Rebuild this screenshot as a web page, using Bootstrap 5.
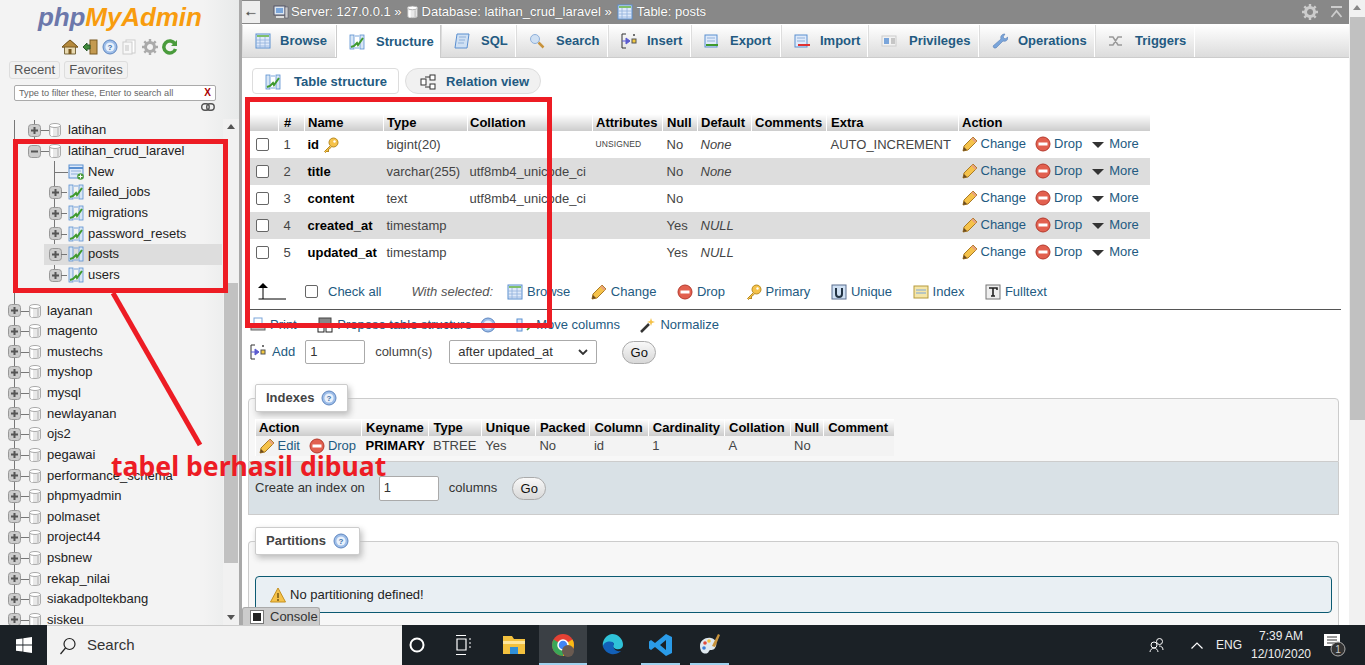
<!DOCTYPE html>
<html lang="en">
<head>
<meta charset="utf-8">
<title>phpMyAdmin</title>
<link href="https://cdn.jsdelivr.net/npm/bootstrap@5.3.0/dist/css/bootstrap.min.css" rel="stylesheet">
<style>
html,body{height:665px;overflow:hidden}
body{font-family:"Liberation Sans",Arial,sans-serif;font-size:13px;color:#444;background:#fff;width:1365px;position:relative}
a{text-decoration:none;color:#235a81}
.ic{width:16px;height:16px;flex:none;display:block}
.app{height:625px}
/* sidebar */
.side{width:242px;flex:none;background:linear-gradient(90deg,#f3f3f3 85%,#e8eaea);border-right:3px solid #a9a9a9;box-sizing:border-box;position:relative}
.logo{font-style:italic;font-weight:700;font-size:26px;line-height:26px;height:36px;padding-top:4px;padding-left:38px;letter-spacing:-.1px}
.logo i{color:#6c78ab}.logo b{color:#f89c0e;font-weight:700;font-style:italic}
.navic{height:25px;padding-left:62px;gap:4px;padding-top:3px}
.rf{padding-left:9px;gap:4px;height:21px}
.rf span{border:1px solid #ddd;border-radius:3px;padding:0 4px;font-size:13px;line-height:16px;height:18px;color:#555;background:#f1f1f1}
.flt{margin:3px 0 0 14px;width:202px;height:16px;background:#fff;border:1px solid #aaa;border-radius:2px;font-size:9.2px;line-height:14px;color:#666;padding:0 4px;justify-content:space-between}
.flt b{color:#a00;font-size:10px}
.lnk{height:21px;padding:2px 25px 0 0;justify-content:flex-end;width:240px}
.tree{position:absolute;left:0;top:120px;width:223px;height:505px;overflow:hidden;font-size:13px;color:#222;background:linear-gradient(#777,#777) 14px 0/1px 100% no-repeat}
.trow{height:20.68px;line-height:16px;position:relative;white-space:nowrap;align-items:center}
.trow::before{content:"";position:absolute;top:50%;height:1px;background:#777}
.lv0{padding-left:8px;height:20.63px}.lv0::before{left:21px;width:8px}
.lv1{padding-left:28px}.lv1::before{left:41px;width:8px}
.lv2{padding-left:49px}.lv2::before{left:61px;width:6px}
.lv2n::before{left:54px;width:14px}
.vl{background:linear-gradient(#777,#777) 34px 0/1px 100% no-repeat}
.sq{width:13px;height:13px;flex:none;display:block}
.sq2{width:12px;height:14px;flex:none;display:block;margin:0 7px 0 8px}
.lv0 .sq2{margin-right:6px}
.sq3{width:16px;height:16px;flex:none;display:block;margin:0 4px 0 6px}
.kids{background:linear-gradient(#777,#777) 54px 0/1px calc(100% - 10px) no-repeat}
.hl{background:linear-gradient(#ddd,#ddd) 44px 0/178px 100% no-repeat}
.gap0{height:14.9px}
.sscr{position:absolute;left:223px;top:119px;width:16px;height:506px;background:#f1f1f1}
.sscr i{position:absolute;left:1px;top:164px;width:14px;height:280px;background:#c1c1c1}
.tu{position:absolute;left:4px;width:0;height:0;border-left:4px solid transparent;border-right:4px solid transparent}
.tu1{top:5px;border-bottom:5px solid #555}
.tu2{bottom:5px;border-top:5px solid #555}
.tu3{top:5px;border-bottom:5px solid #888}
/* main */
.mainc{width:1123px;flex:none;position:relative;overflow:hidden}
.topb{height:24px;background:#888;color:#fff;font-size:13px;gap:4px;text-shadow:0 0 1px #555}
.bk{width:18px;height:22px;background:#eee;color:#555;text-align:center;line-height:20px;font-size:15px;margin-right:9px}
.cyl{width:11px;height:14px;flex:none}
.srv{margin:0 1px 0 -2px}
.dbtx{margin-right:1px}
.topr{margin-left:auto;gap:12px;padding-right:22px}
.mscr{position:absolute;right:0;top:0;width:16px;height:625px;background:#f1f1f1}
.mscr i{position:absolute;left:1px;top:17px;width:15px;height:403px;background:#c1c1c1}
.tabsb{height:33px;margin-top:1px;background:linear-gradient(#fff,#dcdcdc);width:1107px;border-bottom:1px solid #ccc}
.tb{height:32px;font-size:13px;font-weight:700;color:#235a81;border-right:1px solid #fff;border-left:1px solid #ddd;flex:none;align-items:center;box-sizing:border-box;padding-left:12px}
.tb .ic{margin-right:9px}
.tb.on{background:#fff;border-left:1px solid #ccc;border-right:1px solid #ccc;height:33px}
.t1{width:94px}.t2{width:105px}.t3{width:75px}.t4{width:92px}.t5{width:83px}.t6{width:90px}.t7{width:87px}.t8{width:111px}.t9{width:116px}.t10{width:100px}
.t2 .ic,.t4 .ic{margin-right:11px}
.t3 .ic{margin-right:11px}
.t5 .ic{margin-right:10px}
.t6 .ic,.t7 .ic,.t9 .ic{margin-right:10px}
.t10 .ic{margin-right:11px}
.t8 .ic{margin-right:12px}
.pg{padding-left:6px;width:1107px}
.sbt{margin-top:10px;height:26px;padding-left:4px;gap:6px}
.sbt div{border:1px solid #ddd;height:26px;font-weight:700;color:#235a81;padding:1px 10px 0 12px;align-items:center}
.sbt .a1{border-radius:4px;background:#fff;width:147px;gap:13px}
.sbt .a2{border-radius:13px;background:#f1f1f1;width:136px;padding-left:14px;gap:10px}
.stt{border-collapse:collapse;margin-top:20px;table-layout:fixed;width:901px;font-size:13px;color:#444}
.c1{width:30px}.c2{width:26px}.c3{width:79px}.c4{width:84px}.c5{width:125px}.c6{width:70px}.c7{width:35px}.c8{width:54px}.c9{width:75px}.c10{width:132px}.c11{width:191px}
.stt th{height:17px;padding:0 3px;color:#000;font-weight:700;background:linear-gradient(#fff,#ccc);border-left:1px solid #fff;line-height:15px;white-space:nowrap}
.stt td{height:27px;padding:0 3px;white-space:nowrap;overflow:hidden}
.stt th:nth-child(2),.stt td:nth-child(2){padding-left:5px}
.stt th:nth-child(7),.stt td:nth-child(7){padding-left:4px}
.stt th:nth-child(5),.stt td:nth-child(5){padding-left:2px}
.stt th:nth-child(10),.stt td:nth-child(10){padding-left:4px}
.stt tbody tr:nth-child(even) td{background:#ddd}
.stt td.nm{color:#000;font-weight:700}
.cb{width:13px;height:13px;border:1px solid #666;border-radius:2px;background:#fff;display:block;margin-left:4px}
.un{font-size:8.5px;letter-spacing:.1px}
.act{gap:3px;color:#235a81;align-items:center}
.act a{margin-right:6px}
.act a.lst{margin-right:0}
.stt .act{margin-top:-1px}
.tri{width:0;height:0;border-left:6px solid transparent;border-right:6px solid transparent;border-top:6px solid #333;margin:1px 2px 0 1px}
.wsel{height:30px;margin-top:10px;padding-left:10px;align-items:center;color:#235a81}
.wsel .it{gap:4px;align-items:center;margin-right:20.5px;padding-top:1px}
.wsel>.cb,.wsel>.chk,.wsel>.wtx{margin-top:1px}
.arw{margin-right:19px;flex:none}
.wsel .cb{margin:0 10px 0 0;flex:none}
.chk{margin-right:30px}
.wtx{margin-right:14px;color:#555}
.rule{border-top:1px solid #555;margin:3px 0 0 0;width:1093px;height:0}
.prn{height:30px;padding-left:2px;color:#235a81;align-items:center}
.prn .it{gap:4px;align-items:center;margin-right:20.5px}
.addr{height:24px;align-items:center;padding-left:2px}
.addr .ic{margin-right:6px}
.addt{color:#235a81}
.nin{width:60px;height:24px;border:1px solid #aaa;border-radius:2px;padding:0 4px;line-height:22px;background:#fff;margin:0 10px 0 10px;color:#333;flex:none}
.sel{width:148px;height:24px;border:1px solid #aaa;border-radius:2px;background:#fff;padding:0 8px;color:#333;margin:0 25px 0 17px;justify-content:space-between;align-items:center;flex:none}
.gob{border:1px solid #aaa;border-radius:12px;background:linear-gradient(#f8f8f8,#d8d8d8);width:34px;height:23px;text-align:center;line-height:21px;color:#111;flex:none}
.fs{width:1091px;border:1px solid #ccc;border-radius:4px 4px 0 0;background:#f7f7f7;box-sizing:border-box}
.fs1{margin-top:34px;height:64px}
.fs2{margin-top:26px;height:90px;border-bottom:0}
.lg{display:flex;width:fit-content;align-items:center;gap:7px;background:#fff;border:1px solid #ccc;border-radius:2px;height:28px;padding:0 10px;margin:-15px 0 0 6px;font-weight:700;color:#444;box-shadow:2px 3px 6px #bbb;font-size:13px}
.ixt{border-collapse:collapse;margin:7px 0 0 6px;font-size:13px;background:#fff}
.ixt th{height:17px;padding:0 4px;color:#000;font-weight:700;background:linear-gradient(#fff,#ccc);border-left:1px solid #fff;line-height:15px;white-space:nowrap}
.ixt td{height:20px;padding:0 4px;white-space:nowrap;background:#f3f3f3}
.ixt th:nth-child(3),.ixt td:nth-child(3),.ixt th:nth-child(4),.ixt td:nth-child(4),.ixt th:nth-child(6),.ixt td:nth-child(6),.ixt th:nth-child(8),.ixt td:nth-child(8){padding-right:5px}
.ia{width:106px}.ic0{width:70px}
.ixt th.ia{padding-left:3px}
.ixt .act{margin-left:-1px}
.ipk{font-weight:700;color:#000}
.fbar{width:1091px;height:53px;background:#d9e1e6;border:1px solid #ccc;border-top:0;box-sizing:border-box;align-items:center;padding-left:6px;color:#333}
.fbar .nin{margin:0 10px 0 14px;height:25px}
.fbar .gob{margin-left:15px}
.notc{margin:21px 0 0 6px;width:1077px;height:37px;background:#e9eff3;border:1px solid #0c5a72;border-radius:4px;color:#222;align-items:center;gap:4px;padding-left:14px;box-sizing:border-box}
.cons{position:absolute;left:0;bottom:0;width:78px;height:18px;background:#ccc;border:1px solid #aaa;border-bottom:0;border-radius:3px 3px 0 0;gap:6px;padding-left:7px;color:#333;align-items:center;font-size:13px;box-sizing:border-box}
/* taskbar */
.tskb{height:40px;background:#1b2126;color:#fff;box-sizing:border-box}
.sbx{width:355px;height:40px;background:#f2f2f2;color:#333;font-size:15px;gap:10px;align-items:center;padding-left:12px;flex:none;border-top:1px solid #ccc;box-sizing:border-box}
.tki{height:40px;flex:none;display:flex;align-items:center;justify-content:center;position:relative}
.k0{width:47px}.k1{width:29px}.k2{width:58px}.k2 svg{margin-left:6px}.k3{width:50px}.k4{width:48px}.k5,.k6,.k7{width:49px}
.tki.act1{background:#3b4045}
.tki.ul::after{content:"";position:absolute;left:5px;right:5px;bottom:0;height:2px;background:#9fd2ee}
.tki.act1::after{left:0;right:0}
.tray{margin-left:auto;align-items:center;color:#eee;font-size:12px}
.tp{margin-right:26px}
.tc{margin-right:13px}
.te{margin-right:8px}
.tm{width:62px;margin-right:11px;line-height:18px;text-align:center}
.tn{margin-right:16px}
/* annotation */
.rbx{position:absolute;border:5px solid #ed1c24;box-sizing:border-box;pointer-events:none}
.rb1{left:13px;top:139px;width:215px;height:154px}
.rb2{left:245px;top:97px;width:307px;height:231px}
.atx{position:absolute;left:111px;top:453px;font-family:"Noto Sans",sans-serif;font-weight:700;font-size:26.6px;line-height:26px;color:#ed1c24;white-space:nowrap}
.aln{position:absolute;left:0;top:0;width:1365px;height:665px;pointer-events:none}
</style>
</head>
<body>
<svg width="0" height="0" class="position-absolute">
<defs>
<symbol id="p" viewBox="0 0 13 13"><rect x=".5" y=".5" width="12" height="12" rx="3" fill="#ccc" stroke="#999"/><path d="M3 6.5h7M6.5 3v7" stroke="#555" stroke-width="2"/></symbol>
<symbol id="m" viewBox="0 0 13 13"><rect x=".5" y=".5" width="12" height="12" rx="3" fill="#ccc" stroke="#999"/><path d="M3 6.5h7" stroke="#555" stroke-width="2"/></symbol>
<symbol id="db" viewBox="0 0 12 14"><path d="M.5 2.500v9c0 1.200 2.400 2 5.500 2s5.500-.8 5.500-2v-9z" fill="#e8e8e8" stroke="#aaa"/><ellipse cx="6" cy="2.500" rx="5.500" ry="2" fill="#fff" stroke="#aaa"/><path d="M3 5v8" stroke="#fff" stroke-width="2"/><path d="M9 5v8" stroke="#ccc" stroke-width="2"/></symbol>
<symbol id="st" viewBox="0 0 16 16"><rect x="1" y="1" width="4" height="14" fill="#d8e6f5" stroke="#5a8fd0" stroke-width=".8"/><rect x="11" y="1" width="4" height="14" fill="#d8e6f5" stroke="#5a8fd0" stroke-width=".8"/><path d="M6 2h4M6 14h4" stroke="#7aa5da"/><path d="M2 13l3-1 3-3 1 2 5-7" fill="none" stroke="#3f9a2d" stroke-width="2"/></symbol>
<symbol id="br" viewBox="0 0 16 16"><rect x="1" y="1" width="14" height="14" fill="#dfeafa" stroke="#5a8fd0"/><rect x="2" y="2" width="12" height="2" fill="#7fbf6a"/><path d="M1 7h14M1 10h14M1 13h14M5 4v11M10 4v11" stroke="#8fb0da" stroke-width=".8"/></symbol>
<symbol id="nw" viewBox="0 0 16 16"><rect x="1" y="1" width="14" height="13" fill="#dfeafa" stroke="#5a8fd0"/><path d="M1 4h14" stroke="#5a8fd0" stroke-width="2"/><path d="M3 7h10M3 10h7" stroke="#8fb0da"/><circle cx="12.500" cy="12.500" r="3.300" fill="#4a9b3c"/><path d="M10.500 12.500h4M12.500 10.500v4" stroke="#fff"/></symbol>
<symbol id="pen" viewBox="0 0 16 16"><path d="M1 15l1-5L11 1l4 4-9 9z" fill="#f5c24a" stroke="#a87a25"/><path d="M1 15l1-4 3 3z" fill="#6a4a20"/><path d="M10 2l4 4" stroke="#e8a080" stroke-width="2"/></symbol>
<symbol id="dr" viewBox="0 0 16 16"><circle cx="8" cy="8" r="7" fill="#e2604f" stroke="#b5392c"/><rect x="3.500" y="6.500" width="9" height="3" fill="#fff"/></symbol>
<symbol id="key" viewBox="0 0 16 16"><circle cx="10.500" cy="5.500" r="4.500" fill="#f5c24a" stroke="#b88a20"/><circle cx="11.500" cy="4.500" r="1.200" fill="#fff"/><path d="M7 9l-5.500 5.500 1 1L4 14l1 1 1-1-1-1 3.500-3" fill="#f5c24a" stroke="#b88a20"/></symbol>
<symbol id="q" viewBox="0 0 16 16"><circle cx="8" cy="8" r="7" fill="#9dbde8" stroke="#5f87c0"/><circle cx="8" cy="8" r="4.600" fill="#e9f1fb"/><text x="8" y="11" font-size="8" font-weight="700" text-anchor="middle" fill="#3d6ca8" font-family="Liberation Sans">?</text></symbol>
<symbol id="ins" viewBox="0 0 16 16"><path d="M5 1H1v14h4" fill="none" stroke="#333"/><path d="M1 8h4V5l4 3-4 3V8" fill="#5b5bd0" stroke="#5b5bd0"/><rect x="11" y="6" width="4" height="4" fill="#f3c83f" stroke="#555"/><path d="M12 2h2M13 1v2" stroke="#444"/></symbol>
<symbol id="gear" viewBox="0 0 16 16"><circle cx="8" cy="8" r="4.500" fill="none" stroke="#ccc" stroke-width="3"/><path d="M8 0v3M8 13v3M0 8h3M13 8h3M2.300 2.300l2 2M11.700 11.700l2 2M13.700 2.300l-2 2M4.300 11.700l-2 2" stroke="#ccc" stroke-width="2.400"/></symbol>
</defs>
</svg>

<div class="app d-flex">
  <aside class="side">
    <div class="logo"><i>php</i><b>MyAdmin</b></div>
    <div class="navic d-flex">
      <svg class="ic" viewBox="0 0 16 16"><path d="M8 1L0 8h2.500v7h11V8H16z" fill="#e8d9b0" stroke="#7a6a40"/><path d="M8 1L0 8h16z" fill="#b5893c" stroke="#7a5a20"/><rect x="6.500" y="10" width="3" height="5" fill="#7a5a20"/></svg>
      <svg class="ic" viewBox="0 0 16 16"><rect x="8" y="1" width="7" height="14" fill="#c49a50" stroke="#7a5a20"/><path d="M1 8l4-4v2h3v4H5v2z" fill="#3f8a3a" stroke="#2a5a2a"/></svg>
      <svg class="ic" viewBox="0 0 16 16"><use href="#q"/></svg>
      <svg class="ic" viewBox="0 0 16 16"><rect x="4" y="1" width="9" height="13" fill="#fff" stroke="#ccc"/><rect x="1" y="3" width="9" height="12" fill="#f7f7f7" stroke="#ccc"/><rect x="3" y="6" width="4" height="6" fill="#ddd"/></svg>
      <svg class="ic" viewBox="0 0 16 16"><circle cx="8" cy="8" r="4.500" fill="none" stroke="#aaa" stroke-width="3"/><path d="M8 0v3M8 13v3M0 8h3M13 8h3M2.300 2.300l2 2M11.700 11.700l2 2M13.700 2.300l-2 2M4.300 11.700l-2 2" stroke="#aaa" stroke-width="2.400"/></svg>
      <svg class="ic" viewBox="0 0 16 16"><path d="M13 5a6 6 0 1 0 .5 5" fill="none" stroke="#4a9b3c" stroke-width="3.500"/><path d="M9 7h6V1z" fill="#4a9b3c"/></svg>
    </div>
    <div class="rf d-flex"><span>Recent</span><span>Favorites</span></div>
    <div class="flt d-flex"><span>Type to filter these, Enter to search all</span><b>X</b></div>
    <div class="lnk d-flex"><svg width="14" height="8" viewBox="0 0 14 8"><rect x=".7" y=".7" width="7.500" height="6.600" rx="3" fill="none" stroke="#555" stroke-width="1.400"/><rect x="5.700" y=".7" width="7.500" height="6.600" rx="3" fill="none" stroke="#555" stroke-width="1.400"/></svg></div>
    <div class="tree">
      <div class="trow d-flex lv1 vl"><svg class="sq"><use href="#p"/></svg><svg class="sq2"><use href="#db"/></svg><span>latihan</span></div>
      <div class="trow d-flex lv1"><svg class="sq"><use href="#m"/></svg><svg class="sq2"><use href="#db"/></svg><span>latihan_crud_laravel</span></div>
      <div class="kids">
        <div class="trow d-flex lv2 lv2n"><span class="sq"></span><svg class="sq3"><use href="#nw"/></svg><span>New</span></div>
        <div class="trow d-flex lv2"><svg class="sq"><use href="#p"/></svg><svg class="sq3"><use href="#st"/></svg><span>failed_jobs</span></div>
        <div class="trow d-flex lv2"><svg class="sq"><use href="#p"/></svg><svg class="sq3"><use href="#st"/></svg><span>migrations</span></div>
        <div class="trow d-flex lv2"><svg class="sq"><use href="#p"/></svg><svg class="sq3"><use href="#st"/></svg><span>password_resets</span></div>
        <div class="trow d-flex lv2 hl"><svg class="sq"><use href="#p"/></svg><svg class="sq3"><use href="#st"/></svg><span>posts</span></div>
        <div class="trow d-flex lv2"><svg class="sq"><use href="#p"/></svg><svg class="sq3"><use href="#st"/></svg><span>users</span></div>
      </div>
      <div class="gap0"></div>
      <div class="trow d-flex lv0"><svg class="sq"><use href="#p"/></svg><svg class="sq2"><use href="#db"/></svg><span>layanan</span></div>
      <div class="trow d-flex lv0"><svg class="sq"><use href="#p"/></svg><svg class="sq2"><use href="#db"/></svg><span>magento</span></div>
      <div class="trow d-flex lv0"><svg class="sq"><use href="#p"/></svg><svg class="sq2"><use href="#db"/></svg><span>mustechs</span></div>
      <div class="trow d-flex lv0"><svg class="sq"><use href="#p"/></svg><svg class="sq2"><use href="#db"/></svg><span>myshop</span></div>
      <div class="trow d-flex lv0"><svg class="sq"><use href="#p"/></svg><svg class="sq2"><use href="#db"/></svg><span>mysql</span></div>
      <div class="trow d-flex lv0"><svg class="sq"><use href="#p"/></svg><svg class="sq2"><use href="#db"/></svg><span>newlayanan</span></div>
      <div class="trow d-flex lv0"><svg class="sq"><use href="#p"/></svg><svg class="sq2"><use href="#db"/></svg><span>ojs2</span></div>
      <div class="trow d-flex lv0"><svg class="sq"><use href="#p"/></svg><svg class="sq2"><use href="#db"/></svg><span>pegawai</span></div>
      <div class="trow d-flex lv0"><svg class="sq"><use href="#p"/></svg><svg class="sq2"><use href="#db"/></svg><span>performance_schema</span></div>
      <div class="trow d-flex lv0"><svg class="sq"><use href="#p"/></svg><svg class="sq2"><use href="#db"/></svg><span>phpmyadmin</span></div>
      <div class="trow d-flex lv0"><svg class="sq"><use href="#p"/></svg><svg class="sq2"><use href="#db"/></svg><span>polmaset</span></div>
      <div class="trow d-flex lv0"><svg class="sq"><use href="#p"/></svg><svg class="sq2"><use href="#db"/></svg><span>project44</span></div>
      <div class="trow d-flex lv0"><svg class="sq"><use href="#p"/></svg><svg class="sq2"><use href="#db"/></svg><span>psbnew</span></div>
      <div class="trow d-flex lv0"><svg class="sq"><use href="#p"/></svg><svg class="sq2"><use href="#db"/></svg><span>rekap_nilai</span></div>
      <div class="trow d-flex lv0"><svg class="sq"><use href="#p"/></svg><svg class="sq2"><use href="#db"/></svg><span>siakadpoltekbang</span></div>
      <div class="trow d-flex lv0"><svg class="sq"><use href="#p"/></svg><svg class="sq2"><use href="#db"/></svg><span>siskeu</span></div>
    </div>
    <div class="sscr"><span class="tu tu1"></span><i></i><span class="tu tu2"></span></div>
  </aside>

  <main class="mainc">
    <div class="mscr"><span class="tu tu3"></span><i></i></div>
    <div class="topb d-flex align-items-center">
      <div class="bk">←</div>
      <svg class="ic" viewBox="0 0 16 16"><rect x="1" y="2" width="11" height="9" fill="#dce6f0" stroke="#556"/><rect x="3" y="4" width="7" height="5" fill="#7aa5da"/><rect x="12" y="3" width="3" height="11" fill="#ccc" stroke="#556" stroke-width=".6"/><path d="M3 13h8" stroke="#ddd" stroke-width="2"/></svg>
      <span class="srv">Server: 127.0.0.1 »</span>
      <svg class="cyl" viewBox="0 0 12 14"><use href="#db"/></svg>
      <span class="dbtx">Database: latihan_crud_laravel »</span>
      <svg class="ic" viewBox="0 0 16 16"><use href="#br"/></svg>
      <span>Table: posts</span>
      <div class="topr d-flex align-items-center">
        <svg class="ic" viewBox="0 0 16 16"><use href="#gear"/></svg>
        <svg width="13" height="12" viewBox="0 0 13 12"><path d="M1 1h11M1.500 11l5-6 5 6" fill="none" stroke="#ccc" stroke-width="1.800"/></svg>
      </div>
    </div>
    <div class="tabsb d-flex">
      <a class="tb t1 d-flex"><svg class="ic"><use href="#br"/></svg>Browse</a>
      <a class="tb t2 on d-flex"><svg class="ic"><use href="#st"/></svg>Structure</a>
      <a class="tb t3 d-flex"><svg class="ic" viewBox="0 0 16 16"><path d="M3 1h12l-2 14H1z" fill="#cfe0f3" stroke="#5a8fd0"/><path d="M5 4h7M5 7h6M4 10h6" stroke="#8fb0da"/></svg>SQL</a>
      <a class="tb t4 d-flex"><svg class="ic" viewBox="0 0 16 16"><circle cx="6" cy="6" r="4.500" fill="#cfe0f3" stroke="#8fb0da"/><path d="M9.500 9.500l5 5" stroke="#c8933c" stroke-width="2.500"/></svg>Search</a>
      <a class="tb t5 d-flex"><svg class="ic"><use href="#ins"/></svg>Insert</a>
      <a class="tb t6 d-flex"><svg class="ic" viewBox="0 0 16 16"><rect x="1" y="2" width="12" height="12" fill="#dfeafa" stroke="#5a8fd0"/><path d="M3 5h8M3 8h8" stroke="#8fb0da"/><path d="M2 12h12" stroke="#3f9a2d" stroke-width="2"/></svg>Export</a>
      <a class="tb t7 d-flex"><svg class="ic" viewBox="0 0 16 16"><rect x="1" y="2" width="12" height="12" fill="#dfeafa" stroke="#5a8fd0"/><path d="M3 5h8M3 8h8" stroke="#8fb0da"/><path d="M4 12h12" stroke="#e03030" stroke-width="2"/></svg>Import</a>
      <a class="tb t8 d-flex"><svg class="ic" viewBox="0 0 16 16"><rect x="1" y="3" width="14" height="10" fill="#f2f2f2" stroke="#ccc"/><rect x="3" y="5" width="5" height="6" fill="#7aa5da"/><path d="M10 6h4M10 8h4M10 10h4" stroke="#999"/></svg>Privileges</a>
      <a class="tb t9 d-flex"><svg class="ic" viewBox="0 0 16 16"><path d="M2 15L1 13l8-7c-1-3 1-5 4-5l-2 3 2 2 3-2c0 3-2 5-5 4l-7 7z" fill="#7aa5da" stroke="#5a80b5" stroke-width=".6"/></svg>Operations</a>
      <a class="tb t10 d-flex"><svg class="ic" viewBox="0 0 16 16"><path d="M1 4h4l5 8h4M1 12h4l5-8h4" fill="none" stroke="#999" stroke-width="1.500"/></svg>Triggers</a>
    </div>

    <div class="pg">
      <div class="sbt d-flex">
        <div class="a1 d-flex"><svg class="ic"><use href="#st"/></svg>Table structure</div>
        <div class="a2 d-flex"><svg class="ic" viewBox="0 0 16 16"><path d="M5 3h6M5 13h6M5 8H3" stroke="#333" fill="none"/><rect x="10" y="1" width="5" height="5" fill="#fff" stroke="#333"/><rect x="10" y="10" width="5" height="5" fill="#fff" stroke="#333"/><rect x="1" y="5" width="5" height="6" fill="#fff" stroke="#333"/></svg>Relation view</div>
      </div>

      <table class="stt">
        <colgroup><col class="c1"><col class="c2"><col class="c3"><col class="c4"><col class="c5"><col class="c6"><col class="c7"><col class="c8"><col class="c9"><col class="c10"><col class="c11"></colgroup>
        <thead><tr><th></th><th>#</th><th>Name</th><th>Type</th><th>Collation</th><th>Attributes</th><th>Null</th><th>Default</th><th>Comments</th><th>Extra</th><th>Action</th></tr></thead>
        <tbody>
          <tr><td><span class="cb"></span></td><td>1</td><td class="nm"><span class="d-flex align-items-center gap-1">id <svg class="ic"><use href="#key"/></svg></span></td><td>bigint(20)</td><td></td><td class="un">UNSIGNED</td><td>No</td><td><i>None</i></td><td></td><td>AUTO_INCREMENT</td><td><div class="act d-flex"><svg class="ic"><use href="#pen"/></svg><a>Change</a><svg class="ic"><use href="#dr"/></svg><a>Drop</a><span class="tri"></span><a>More</a></div></td></tr>
          <tr><td><span class="cb"></span></td><td>2</td><td class="nm">title</td><td>varchar(255)</td><td>utf8mb4_unicode_ci</td><td></td><td>No</td><td><i>None</i></td><td></td><td></td><td><div class="act d-flex"><svg class="ic"><use href="#pen"/></svg><a>Change</a><svg class="ic"><use href="#dr"/></svg><a>Drop</a><span class="tri"></span><a>More</a></div></td></tr>
          <tr><td><span class="cb"></span></td><td>3</td><td class="nm">content</td><td>text</td><td>utf8mb4_unicode_ci</td><td></td><td>No</td><td></td><td></td><td></td><td><div class="act d-flex"><svg class="ic"><use href="#pen"/></svg><a>Change</a><svg class="ic"><use href="#dr"/></svg><a>Drop</a><span class="tri"></span><a>More</a></div></td></tr>
          <tr><td><span class="cb"></span></td><td>4</td><td class="nm">created_at</td><td>timestamp</td><td></td><td></td><td>Yes</td><td><i>NULL</i></td><td></td><td></td><td><div class="act d-flex"><svg class="ic"><use href="#pen"/></svg><a>Change</a><svg class="ic"><use href="#dr"/></svg><a>Drop</a><span class="tri"></span><a>More</a></div></td></tr>
          <tr><td><span class="cb"></span></td><td>5</td><td class="nm">updated_at</td><td>timestamp</td><td></td><td></td><td>Yes</td><td><i>NULL</i></td><td></td><td></td><td><div class="act d-flex"><svg class="ic"><use href="#pen"/></svg><a>Change</a><svg class="ic"><use href="#dr"/></svg><a>Drop</a><span class="tri"></span><a>More</a></div></td></tr>
        </tbody>
      </table>

      <div class="wsel d-flex">
        <svg width="28" height="18" viewBox="0 0 28 18" class="arw"><path d="M.5 17h28M5 17V4" stroke="#000" fill="none"/><path d="M0 6l5-5 5 5z" fill="#000"/></svg>
        <span class="cb"></span>
        <a class="chk">Check all</a>
        <i class="wtx">With selected:</i>
        <span class="it d-flex"><svg class="ic"><use href="#br"/></svg><a>Browse</a></span>
        <span class="it d-flex"><svg class="ic"><use href="#pen"/></svg><a>Change</a></span>
        <span class="it d-flex"><svg class="ic"><use href="#dr"/></svg><a>Drop</a></span>
        <span class="it d-flex"><svg class="ic"><use href="#key"/></svg><a>Primary</a></span>
        <span class="it d-flex"><svg class="ic" viewBox="0 0 16 16"><rect x="1" y="1" width="14" height="14" fill="#cfe0f3" stroke="#5a6f8f"/><path d="M5 4v6a3 3 0 0 0 6 0V4" fill="none" stroke="#234" stroke-width="2"/></svg><a>Unique</a></span>
        <span class="it d-flex"><svg class="ic" viewBox="0 0 16 16"><rect x="1" y="2" width="14" height="12" fill="#f5e6a8" stroke="#b59a3c"/><path d="M3 6h10M3 9h10" stroke="#7aa5da"/></svg><a>Index</a></span>
        <span class="it d-flex"><svg class="ic" viewBox="0 0 16 16"><rect x="1" y="1" width="14" height="14" fill="#eee" stroke="#777"/><path d="M4 4h8v2M8 4v8M6 12h4" fill="none" stroke="#222" stroke-width="1.600"/></svg><a>Fulltext</a></span>
      </div>
      <div class="rule"></div>
      <div class="prn d-flex">
        <span class="it d-flex"><svg class="ic" viewBox="0 0 16 16"><rect x="4" y="1" width="8" height="7" fill="#fff" stroke="#7aa5da"/><rect x="1" y="7" width="14" height="6" fill="#bbb" stroke="#666"/></svg><a>Print</a></span>
        <span class="it d-flex"><svg class="ic" viewBox="0 0 16 16"><rect x="2" y="1" width="12" height="8" fill="#888" stroke="#444"/><rect x="1" y="10" width="6" height="5" fill="#fff" stroke="#222"/><rect x="9" y="10" width="6" height="5" fill="#fff" stroke="#222"/></svg><a>Propose table structure</a><svg class="ic ms-1"><use href="#q"/></svg></span>
        <span class="it d-flex"><svg class="ic" viewBox="0 0 16 16"><rect x="1" y="2" width="5" height="12" fill="#dfeafa" stroke="#5a8fd0"/><path d="M7 10h6M11 7l3 3-3 3" fill="none" stroke="#3f9a2d" stroke-width="1.600"/></svg><a>Move columns</a></span>
        <span class="it d-flex"><svg class="ic" viewBox="0 0 16 16"><path d="M1 15L9 7" stroke="#333" stroke-width="2.500"/><path d="M11 1l1 3 3 1-3 1-1 3-1-3-3-1 3-1z" fill="#f5c24a"/></svg><a>Normalize</a></span>
      </div>
      <div class="addr d-flex">
        <svg class="ic"><use href="#ins"/></svg>
        <span class="addt">Add</span>
        <span class="nin">1</span>
        <span>column(s)</span>
        <span class="sel d-flex">after updated_at<svg width="10" height="6" viewBox="0 0 10 6"><path d="M1 1l4 4 4-4" fill="none" stroke="#333" stroke-width="1.800"/></svg></span>
        <span class="gob">Go</span>
      </div>

      <div class="fs fs1">
        <div class="lg">Indexes <svg class="ic"><use href="#q"/></svg></div>
        <table class="ixt">
          <thead><tr><th class="ia">Action</th><th>Keyname</th><th>Type</th><th>Unique</th><th>Packed</th><th>Column</th><th>Cardinality</th><th>Collation</th><th>Null</th><th class="ic0">Comment</th></tr></thead>
          <tbody><tr><td><div class="act d-flex"><svg class="ic"><use href="#pen"/></svg><a>Edit</a><svg class="ic"><use href="#dr"/></svg><a class="lst">Drop</a></div></td><td class="ipk">PRIMARY</td><td>BTREE</td><td>Yes</td><td>No</td><td>id</td><td>1</td><td>A</td><td>No</td><td></td></tr></tbody>
        </table>
      </div>
      <div class="fbar d-flex">Create an index on<span class="nin">1</span>columns<span class="gob">Go</span></div>

      <div class="fs fs2">
        <div class="lg">Partitions <svg class="ic"><use href="#q"/></svg></div>
        <div class="notc d-flex"><svg class="ic" viewBox="0 0 16 16"><path d="M8 1l7.500 14H.5z" fill="#f5c24a" stroke="#c49020"/><path d="M8 6v5M8 12v2" stroke="#7a5a10" stroke-width="1.500"/></svg>No partitioning defined!</div>
      </div>
    </div>

    <div class="cons d-flex"><svg width="14" height="14" viewBox="0 0 14 14"><rect x=".5" y=".5" width="13" height="13" fill="#fff" stroke="#777"/><rect x="3" y="3" width="8" height="8" fill="#222"/></svg>Console</div>
  </main>
</div>

<footer class="tskb d-flex">
  <div class="tki k0"><svg width="16" height="16" viewBox="0 0 16 16"><path d="M0 2.300l6.500-.9v6.200H0zM7.300 1.300L16 0v7.600H7.300zM0 8.400h6.500v6.200L0 13.700zM7.300 8.400H16V16l-8.700-1.200z" fill="#fff"/></svg></div>
  <div class="sbx d-flex"><svg width="18" height="18" viewBox="0 0 18 18"><circle cx="10.500" cy="7" r="5.500" fill="none" stroke="#222" stroke-width="1.200"/><path d="M6.500 11L1.500 17" stroke="#222" stroke-width="1.200"/></svg><span>Search</span></div>
  <div class="tki k1"><svg width="16" height="16" viewBox="0 0 16 16"><circle cx="8" cy="8" r="6.500" fill="none" stroke="#fff" stroke-width="2"/></svg></div>
  <div class="tki k2"><svg width="16" height="20" viewBox="0 0 16 20"><path d="M1 .5h10M1 19.500h10M2 4h9v11H2zM14 4h2M14 8h2M14 12h2" fill="none" stroke="#fff" stroke-width="1.200"/></svg></div>
  <div class="tki k3"><svg width="22" height="20" viewBox="0 0 22 20"><path d="M0 1h9l2 3h11v15H0z" fill="#f3c13e"/><rect y="6" width="22" height="3" fill="#fde59a"/><rect x="7" y="12" width="8" height="7" fill="#2f8fd8"/></svg></div>
  <div class="tki k4 act1 ul"><svg width="24" height="24" viewBox="0 0 24 24"><circle cx="12" cy="12" r="11" fill="#e44134"/><path d="M12 12L2.500 6.500A11 11 0 0 0 12 23z" fill="#3aa757"/><path d="M12 12l9.500-5.500A11 11 0 0 1 12 23z" fill="#f9bc15"/><circle cx="12" cy="12" r="5" fill="#4285f4" stroke="#fff" stroke-width="1.500"/><circle cx="17" cy="18" r="6" fill="#6a5a50"/></svg></div>
  <div class="tki k5"><svg width="24" height="24" viewBox="0 0 24 24"><path d="M12 1a11 11 0 0 1 11 11c0 3-3 5-7 4-3-1-4-3-2-5-1-3-9-3-11 3A11 11 0 0 1 12 1z" fill="#2fc2d8"/><path d="M3 14c0-6 10-7 11-3-2 4 2 8 7 7a11 11 0 0 1-18-4z" fill="#1260b8"/></svg></div>
  <div class="tki k6 ul"><svg width="24" height="24" viewBox="0 0 24 24"><path d="M17 1l6 3v16l-6 3L6 14l-4 3-2-1.500V8.500L2 7l4 3zM17 7l-6 5 6 5z" fill="#2a9be8" fill-rule="evenodd"/></svg></div>
  <div class="tki k7 ul"><svg width="24" height="24" viewBox="0 0 24 24"><path d="M2 13c0-6 6-9 11-8 5 1 7 6 4 10-2 3-5 1-6 3-1 3-4 3-6 2-2-1-3-4-3-7z" fill="#dfe8ee"/><circle cx="7" cy="10" r="1.800" fill="#e04a3a"/><circle cx="11" cy="8" r="1.800" fill="#f3c13e"/><circle cx="6" cy="15" r="1.800" fill="#3a7fd8"/><path d="M14 13l6-12 2 1-5 12z" fill="#c8933c"/></svg></div>
  <div class="tray d-flex">
    <svg width="16" height="16" viewBox="0 0 16 16" class="tp"><circle cx="10.500" cy="4.500" r="3" fill="none" stroke="#fff"/><circle cx="5" cy="8" r="3" fill="none" stroke="#fff"/><path d="M1 15c0-2 2-4 4-4s4 2 4 4M10 9c2 0 4 1 4 4" fill="none" stroke="#fff"/></svg>
    <svg width="12" height="7" viewBox="0 0 12 7" class="tc"><path d="M.5 6.500L6 1l5.500 5.500" fill="none" stroke="#fff" stroke-width="1.200"/></svg>
    <span class="te">ENG</span>
    <div class="tm">7:39 AM<br>12/10/2020</div>
    <svg width="26" height="26" viewBox="0 0 26 26" class="tn"><path d="M1 2h16v12H1z" fill="#fff"/><path d="M4 5h10M4 8h10M4 11h10" stroke="#333"/><circle cx="15" cy="17" r="7" fill="#333" stroke="#aaa"/><text x="15" y="21" font-size="10" fill="#ccc" text-anchor="middle" font-family="Liberation Sans">1</text></svg>
  </div>
</footer>

<div class="rbx rb1"></div>
<div class="rbx rb2"></div>
<svg class="aln" viewBox="0 0 1365 665"><path d="M113 293L200 445" stroke="#ed1c24" stroke-width="5" fill="none"/></svg>
<div class="atx">tabel berhasil dibuat</div>

<script src="https://cdn.jsdelivr.net/npm/bootstrap@5.3.0/dist/js/bootstrap.bundle.min.js"></script>
</body>
</html>
